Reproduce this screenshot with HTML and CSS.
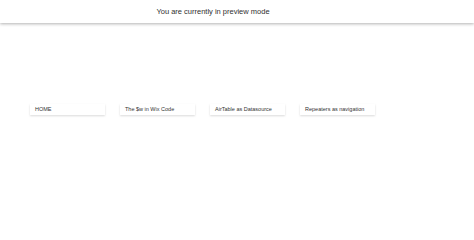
FILE: index.html
```html
<!DOCTYPE html>
<html>
<head>
<meta charset="utf-8">
<link rel="stylesheet" href="styles.css">
</head>
<body>
<header class="preview-bar">You are currently in preview mode</header>
<nav class="menu">
  <div class="menu-item">HOME</div>
  <div class="menu-item">The $w in Wix Code</div>
  <div class="menu-item">AirTable as Datasource</div>
  <div class="menu-item">Repeaters as navigation</div>
</nav>
</body>
</html>
```
FILE: styles.css
```css
html, body {
  margin: 0;
  padding: 0;
  background: #ffffff;
  font-family: "Liberation Sans", Arial, sans-serif;
  width: 474px;
  height: 209px;
  overflow: hidden;
}
.preview-bar {
  height: 23px;
  box-sizing: border-box;
  padding-top: 6.5px;
  padding-right: 48px;
  text-align: center;
  font-size: 7.5px;
  line-height: 10px;
  color: #303030;
  background: #ffffff;
  box-shadow: 0 1px 3px rgba(0,0,0,0.3);
}
.menu {
  display: flex;
  gap: 15px;
  margin-top: 81px;
  padding-left: 30px;
}
.menu-item {
  width: 75px;
  height: 11px;
  box-sizing: border-box;
  padding-left: 5px;
  font-size: 5.5px;
  line-height: 11px;
  color: #333;
  background: #fff;
  box-shadow: 0 1px 2px rgba(0,0,0,0.15);
}
```
